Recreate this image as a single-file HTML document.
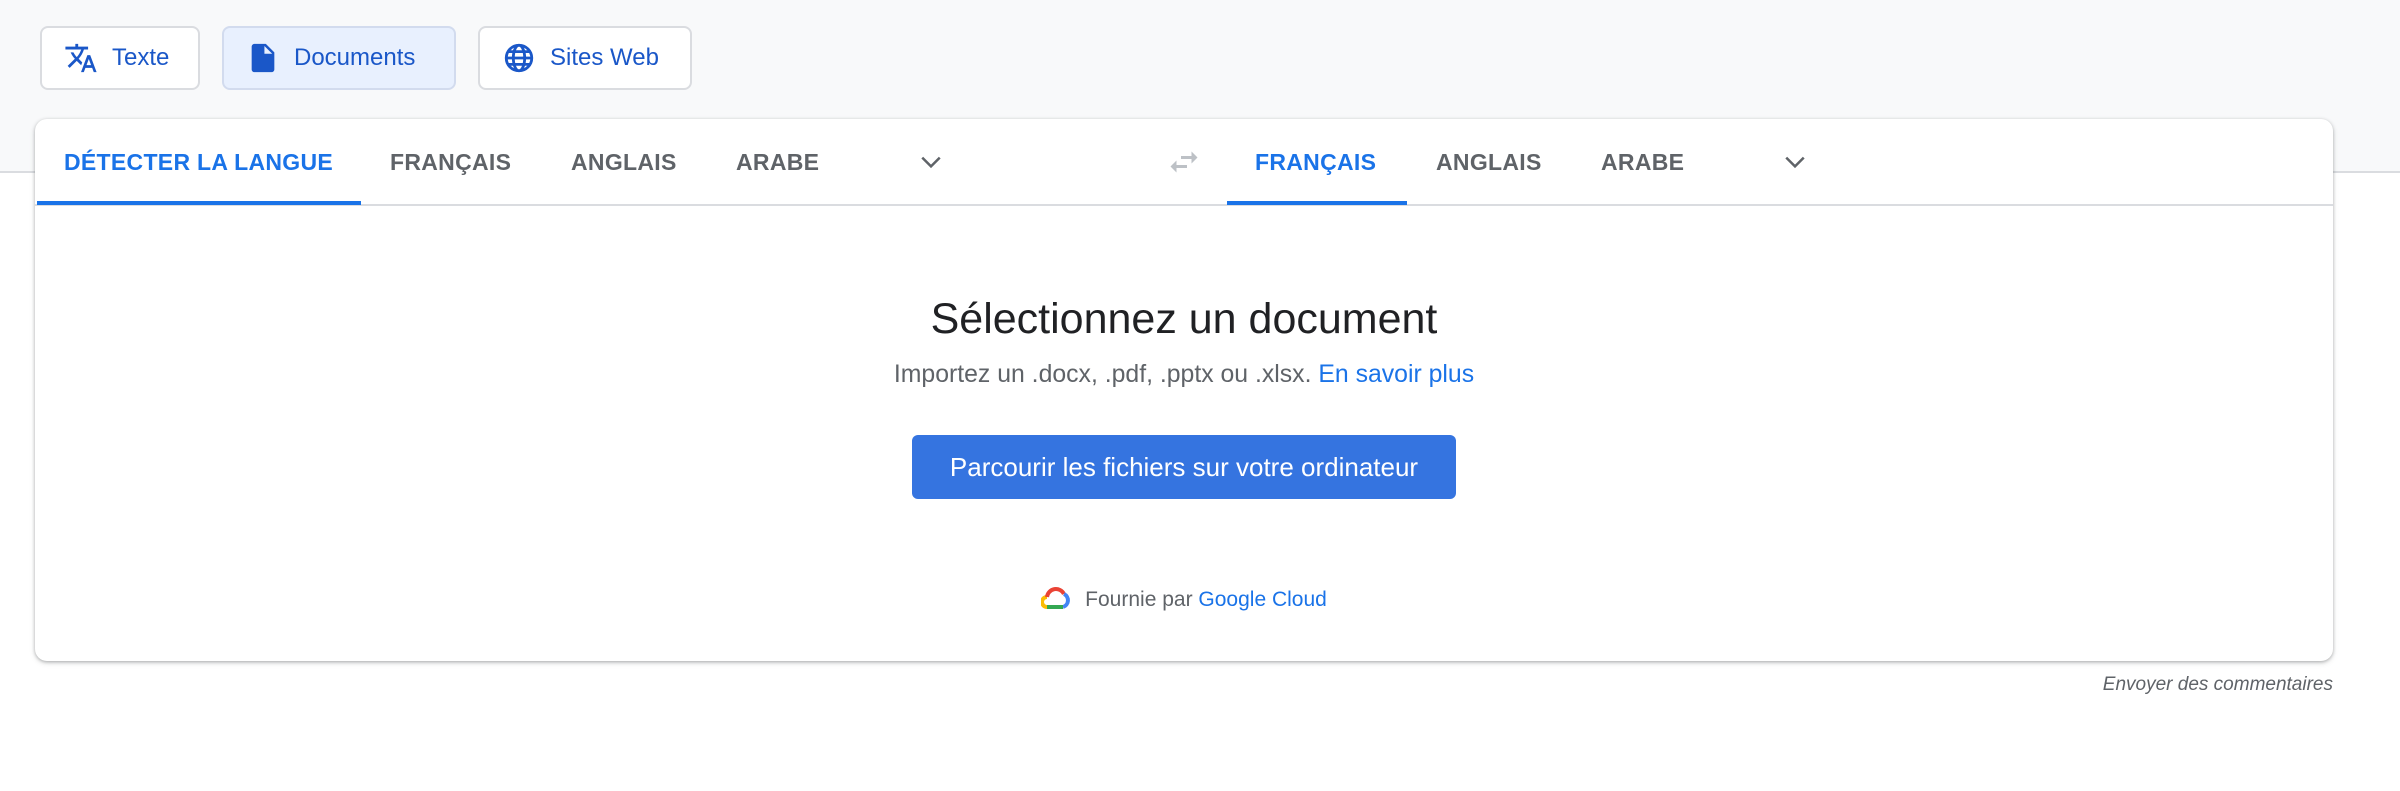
<!DOCTYPE html>
<html><head><meta charset="utf-8"><style>
*{box-sizing:border-box;margin:0;padding:0}
body{width:2400px;height:791px;background:#fff;font-family:"Liberation Sans",Arial,sans-serif;position:relative;overflow:hidden}
.top{position:absolute;left:0;top:0;width:2400px;height:173px;background:#f8f9fa;border-bottom:2px solid #dadce0}
.btn{position:absolute;top:26px;height:64px;border:2px solid #dadce0;border-radius:8px;background:#fff;color:#1a57c8;font-size:24px;display:flex;align-items:center;padding-left:22px;gap:14px}
.btn.sel{background:#e8f0fe;border-color:#d2dbee}
.card{position:absolute;left:35px;top:119px;width:2298px;height:542px;background:#fff;border-radius:12px;box-shadow:0 1px 3px rgba(60,64,67,.35),0 2px 6px rgba(60,64,67,.15)}
.tabs{position:absolute;left:0;top:0;width:100%;height:87px;border-bottom:2px solid #dadce0}
.t{position:absolute;top:30px;font-size:23px;color:#5f6368;font-weight:bold;letter-spacing:.3px}
.t.a{color:#1a73e8}
.ul{position:absolute;top:82px;height:4px;background:#1a73e8}
.c{position:absolute;left:0;width:100%;text-align:center}
</style></head><body>
<div class="top"></div>
<div class="btn" style="left:40px;width:160px"><svg width="34" height="34" viewBox="0 0 24 24" fill="#1a57c8"><path d="M12.87 15.07l-2.54-2.51.03-.03A17.5 17.5 0 0014.07 6H17V4h-7V2H8v2H1v2h11.17C11.5 7.92 10.44 9.75 9 11.35 8.07 10.32 7.3 9.19 6.69 8h-2c.73 1.63 1.73 3.17 2.98 4.56l-5.09 5.02L4 19l5-5 3.11 3.11.76-2.04zM18.5 10h-2L12 22h2l1.12-3h4.75L21 22h2l-4.5-12zm-2.62 7l1.62-4.33L19.12 17h-3.24z"/></svg>Texte</div>
<div class="btn sel" style="left:222px;width:234px"><svg width="34" height="34" viewBox="0 0 24 24" fill="#1a57c8"><path d="M6 2c-1.1 0-2 .9-2 2v16c0 1.1.9 2 2 2h12c1.1 0 2-.9 2-2V8l-6-6H6zm7 7V3.5L18.5 9H13z"/></svg>Documents</div>
<div class="btn" style="left:478px;width:214px"><svg width="34" height="34" viewBox="0 0 24 24" fill="none" stroke="#1a57c8" stroke-width="2"><circle cx="12" cy="12" r="9"/><ellipse cx="12" cy="12" rx="4" ry="9"/><path d="M3 12h18M4.5 7.5h15M4.5 16.5h15"/></svg>Sites Web</div>
<div class="card">
 <div class="tabs">
  <div class="t a" style="left:29px">DÉTECTER LA LANGUE</div>
  <div class="ul" style="left:2px;width:324px"></div>
  <div class="t" style="left:355px">FRANÇAIS</div>
  <div class="t" style="left:536px">ANGLAIS</div>
  <div class="t" style="left:701px">ARABE</div>
  <svg style="position:absolute;left:881px;top:28px" width="30" height="30" viewBox="0 0 24 24"><path d="M5 8.5l7 7 7-7" fill="none" stroke="#5f6368" stroke-width="2"/></svg>
  <svg style="position:absolute;left:1131px;top:25px" width="36" height="36" viewBox="0 0 24 24" fill="#bdc1c6"><path d="M6.99 11L3 15l3.99 4v-3H14v-2H6.99v-3zM21 9l-3.99-4v3H10v2h7.01v3L21 9z"/></svg>
  <div class="t a" style="left:1220px">FRANÇAIS</div>
  <div class="ul" style="left:1192px;width:180px"></div>
  <div class="t" style="left:1401px">ANGLAIS</div>
  <div class="t" style="left:1566px">ARABE</div>
  <svg style="position:absolute;left:1745px;top:28px" width="30" height="30" viewBox="0 0 24 24"><path d="M5 8.5l7 7 7-7" fill="none" stroke="#5f6368" stroke-width="2"/></svg>
 </div>
 <div class="c" style="top:176px;font-size:43px;color:#202124">Sélectionnez un document</div>
 <div class="c" style="top:242px;font-size:24.8px;color:#5f6368">Importez un .docx, .pdf, .pptx ou .xlsx. <span style="color:#1a73e8">En savoir plus</span></div>
 <div style="position:absolute;left:877px;top:316px;width:544px;height:64px;background:#3574e0;border-radius:6px;color:#fff;font-size:26px;display:flex;align-items:center;justify-content:center">Parcourir les fichiers sur votre ordinateur</div>
 <div class="c" style="top:468px;font-size:21px;color:#5f6368;display:flex;justify-content:center;align-items:center;gap:14px">
  <svg width="30" height="26" viewBox="0 0 30 26"><path d="M6 20a5 5 0 010-10" fill="none" stroke="#fbbc04" stroke-width="4"/><path d="M6 10a9 9 0 0117-3" fill="none" stroke="#ea4335" stroke-width="4"/><path d="M23 7a7 7 0 01-1 13" fill="none" stroke="#4285f4" stroke-width="4"/><path d="M22 20H6" fill="none" stroke="#34a853" stroke-width="4"/></svg>
  <span>Fournie par <span style="color:#1a73e8">Google Cloud</span></span>
 </div>
</div>
<div style="position:absolute;right:67px;top:674px;font-size:19px;font-style:italic;color:#5f6368">Envoyer des commentaires</div>
</body></html>
